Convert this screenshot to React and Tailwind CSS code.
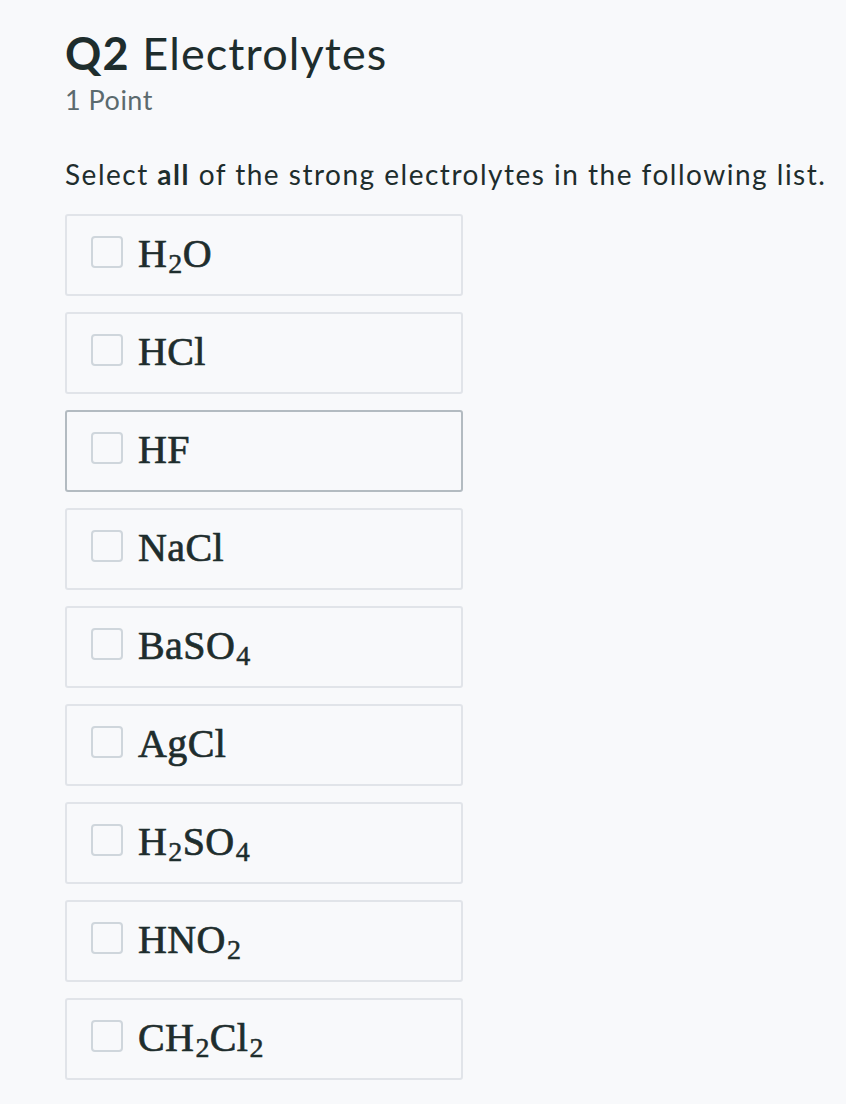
import { useState } from 'react'

const options = [
  { id: 'h2o', label: <>H<sub>2</sub>O</> },
  { id: 'hcl', label: <>HCl</> },
  { id: 'hf', label: <>HF</>, hover: true },
  { id: 'nacl', label: <>NaCl</> },
  { id: 'baso4', label: <>BaSO<sub>4</sub></> },
  { id: 'agcl', label: <>AgCl</> },
  { id: 'h2so4', label: <>H<sub>2</sub>SO<sub>4</sub></> },
  { id: 'hno2', label: <>HNO<sub>2</sub></> },
  { id: 'ch2cl2', label: <>CH<sub>2</sub>Cl<sub>2</sub></> },
]

function Option({ option, checked, onToggle }) {
  return (
    <label
      className={`flex h-[82px] w-[398px] cursor-pointer items-start rounded-[3px] border-2 bg-[#f8f9fb] pl-[24px] pt-[20px] ${
        option.hover ? 'border-[#b3bbc1]' : 'border-[#e1e4e9]'
      }`}
    >
      <input type="checkbox" checked={checked} onChange={onToggle} className="peer sr-only" />
      <span className="h-[32px] w-[32px] shrink-0 rounded-[4px] border-2 border-[#cfd6dc] bg-[#f8f9fb] peer-checked:bg-[#2d6fb7]" />
      <span className="ml-[15px] font-['Liberation_Serif',serif] text-[40px] leading-[36px] tracking-[0.4px] text-[#1e2d2d] [-webkit-text-stroke:0.7px_#1e2d2d] [&_sub]:bottom-0 [&_sub]:ml-[1px] [&_sub]:text-[28px] [&_sub]:leading-none [&_sub]:align-[-6px] [&_sub]:[-webkit-text-stroke:0.5px_#1e2d2d]">
        {option.label}
      </span>
    </label>
  )
}

export default function App() {
  const [checked, setChecked] = useState({})

  return (
    <div className="min-h-[1104px] bg-[#f8f9fb] pl-[65px] pt-[27px] font-['Lato','Noto_Sans',sans-serif] text-[#1e2d2d]">
      <h1 className="text-[45px] leading-[52px] tracking-[1.1px]">
        <span className="font-bold">Q2</span> Electrolytes
      </h1>
      <p className="mt-[5px] text-[27px] leading-[32px] tracking-[0.5px] text-[#5b6a6e]">1 Point</p>
      <p className="mt-[40px] text-[28px] leading-[36px] tracking-[1.5px]">
        Select <span className="font-bold">all</span> of the strong electrolytes in the following list.
      </p>
      <div className="mt-[22px] flex flex-col gap-[16px]">
        {options.map((option) => (
          <Option
            key={option.id}
            option={option}
            checked={!!checked[option.id]}
            onToggle={() => setChecked((current) => ({ ...current, [option.id]: !current[option.id] }))}
          />
        ))}
      </div>
    </div>
  )
}
